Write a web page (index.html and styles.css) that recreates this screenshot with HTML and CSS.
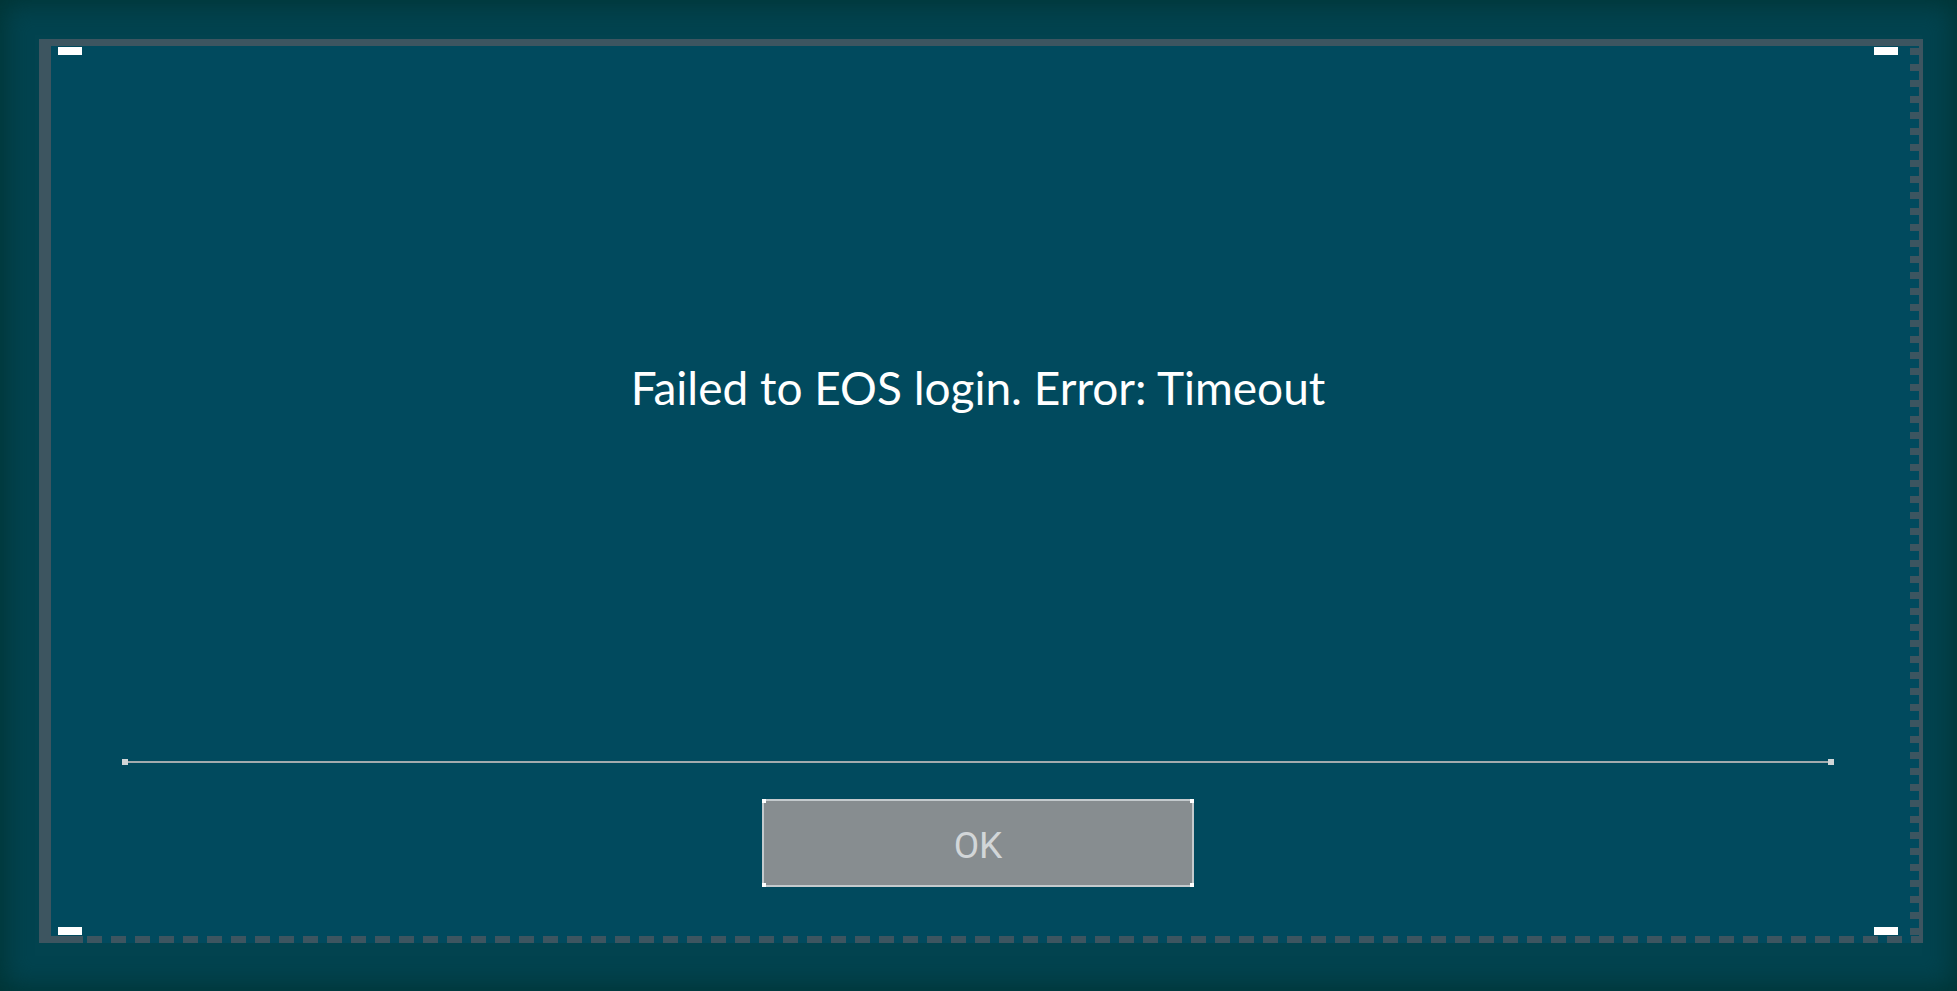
FILE: index.html
```html
<!DOCTYPE html>
<html>

    <head>
        <title>Error</title>
        <meta charset="UTF-8">
        <meta name="viewport" content="width=device-width, initial-scale=1.0">
        <link rel="stylesheet" href="styles.css">
    </head>

    <body>
        <div class="frame">
            <!-- corner ticks -->
            <span class="tick tickTL"></span>
            <span class="tick tickTR"></span>
            <span class="tick tickBL"></span>
            <span class="tick tickBR"></span>

            <div class="message">
                <p class="messageText">Failed to EOS login. Error: Timeout</p>
            </div>

            <div class="divider"></div>

            <div class="actions">
                <button class="okButton">OK</button>
            </div>
        </div>
    </body>

</html>
```

FILE: styles.css
```css
* {
    margin: 0;
    padding: 0;
    box-sizing: border-box;
}

html {
    background: #023f4a;
}

body {
    width: 1957px;
    height: 991px;
    padding: 39px 34px 48px 39px;
    background: #02434f;
    box-shadow: inset 0 0 26px 4px #013434;
    overflow: hidden;
}

.frame {
    position: relative;
    display: flex;
    flex-direction: column;
    height: 904px;
    padding: 0 85px 0 71px;

    border-top: 7px solid #3d5560;
    border-left: 12px solid #3d5560;
    border-right: 4px solid #3d5560;

    background:
        linear-gradient(#3d5560, #3d5560) left bottom / 32px 7px no-repeat,
        linear-gradient(to right, #3d5560 0 15px, transparent 15px) 12px bottom / 24px 7px repeat-x,
        linear-gradient(to bottom, #3d5560 0 7px, transparent 7px) right 34px / 9px 16px repeat-y,
        #014a5e;
}

.tick {
    position: absolute;
    width: 24px;
    height: 8px;
    background: #ffffff;
}

.tickTL {
    left: 7px;
    top: 1px;
}

.tickTR {
    right: 21px;
    top: 1px;
}

.tickBL {
    left: 7px;
    bottom: 8px;
}

.tickBR {
    right: 21px;
    bottom: 8px;
}

.message {
    height: 684px;
    display: flex;
    align-items: center;
    justify-content: center;
}

.messageText {
    font-family: "Lato", "Noto Sans", sans-serif;
    font-size: 46px;
    line-height: 1;
    color: #ffffff;
}

.divider {
    height: 6px;
    margin-top: 29px;
    background:
        linear-gradient(#d0d5d7, #d0d5d7) left center / 6px 6px no-repeat,
        linear-gradient(#d0d5d7, #d0d5d7) right center / 6px 6px no-repeat,
        linear-gradient(#a3abae, #a3abae) center / 100% 2px no-repeat;
}

.actions {
    display: flex;
    justify-content: center;
    margin-top: 34px;
}

.okButton {
    width: 432px;
    height: 88px;
    padding-top: 4px;
    border: 0;
    font-family: "Roboto", "Liberation Sans", sans-serif;
    font-size: 37px;
    color: #d2d6d8;
    background:
        linear-gradient(#ffffff, #ffffff) left top / 4px 4px no-repeat,
        linear-gradient(#ffffff, #ffffff) right top / 4px 4px no-repeat,
        linear-gradient(#ffffff, #ffffff) left bottom / 4px 4px no-repeat,
        linear-gradient(#ffffff, #ffffff) right bottom / 4px 4px no-repeat,
        linear-gradient(#c4cacd, #c4cacd) top / 100% 2px no-repeat,
        linear-gradient(#c4cacd, #c4cacd) bottom / 100% 2px no-repeat,
        linear-gradient(#c4cacd, #c4cacd) left / 2px 100% no-repeat,
        linear-gradient(#c4cacd, #c4cacd) right / 2px 100% no-repeat,
        #878d90;
}
```
